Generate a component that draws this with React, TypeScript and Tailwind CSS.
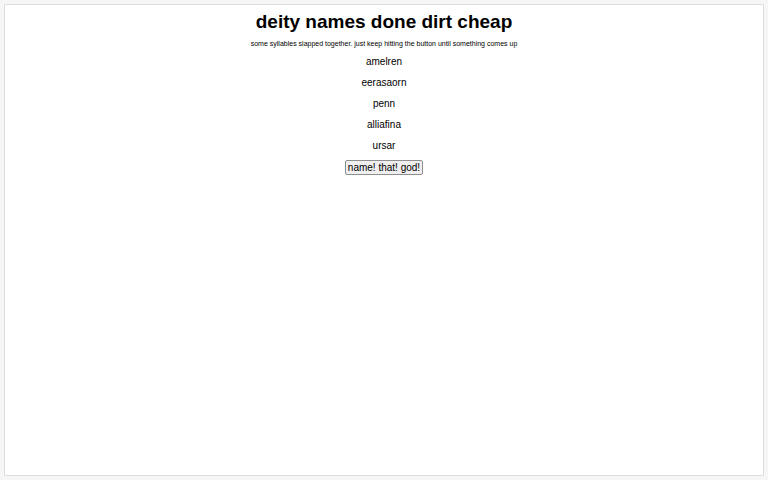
'use client';

import { useState } from 'react';

const starts = ['amel', 'eera', 'pe', 'allia', 'ur', 'tho', 'vel', 'isha'];
const ends = ['ren', 'saorn', 'nn', 'fina', 'sar', 'mir', 'dune', 'los'];

const pick = (list: string[]) => list[Math.floor(Math.random() * list.length)];

const App = () => {
  const [names, setNames] = useState(['amelren', 'eerasaorn', 'penn', 'alliafina', 'ursar']);

  const nameThatGod = () => {
    setNames(names.map(() => pick(starts) + pick(ends)));
  };

  return (
    <div className="flex min-h-screen bg-[#f6f6f6] p-1 font-['Liberation_Sans',Arial,sans-serif] text-black">
      <main className="flex flex-1 flex-col items-center border border-[#dddddd] bg-white pt-[5px] text-center">
        <h1 className="text-[19px] leading-6 font-bold">deity names done dirt cheap</h1>
        <p className="mt-1 text-[7px] leading-3">
          some syllables slapped together. just keep hitting the button until something comes up
        </p>
        <ul className="mt-[5px] flex flex-col gap-2">
          {names.map((name, i) => (
            <li key={i} className="text-[10px] leading-[13px]">
              {name}
            </li>
          ))}
        </ul>
        <button
          type="button"
          onClick={nameThatGod}
          className="mt-2 rounded-xs border border-[#8f8f8f] bg-[#efefef] px-0.5 text-[10px] leading-[13px]"
        >
          name! that! god!
        </button>
      </main>
    </div>
  );
};

export default App;
